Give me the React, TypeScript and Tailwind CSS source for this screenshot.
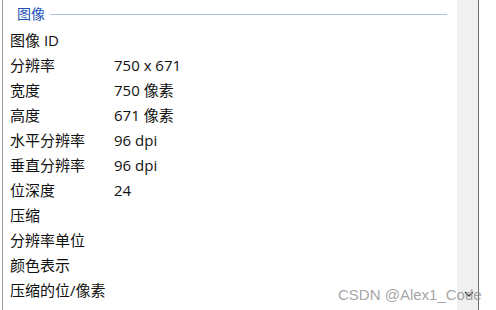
import React from 'react';

const rows: [string, string][] = [
  ['图像 ID', ''],
  ['分辨率', '750 x 671'],
  ['宽度', '750 像素'],
  ['高度', '671 像素'],
  ['水平分辨率', '96 dpi'],
  ['垂直分辨率', '96 dpi'],
  ['位深度', '24'],
  ['压缩', ''],
  ['分辨率单位', ''],
  ['颜色表示', ''],
  ['压缩的位/像素', ''],
];

export default function App() {
  return (
    <div
      className="relative flex w-[496px] h-[310px] overflow-hidden bg-white text-[#111]"
      style={{ fontFamily: '"Segoe UI", "Open Sans", "Noto Sans CJK SC", sans-serif' }}
    >
      <div className="w-[2px] shrink-0" />
      <div className="w-px shrink-0 bg-[#a0a0a0]" />
      <div className="flex-1 flex flex-col">
        <div className="flex items-center h-[28px] pl-[14px] pr-[10px]">
          <span className="text-[14px] leading-none text-[#1c4fb8]">图像</span>
          <div className="flex-1 ml-[5px] h-px bg-[#b4c3e4]" />
        </div>
        {rows.map(([k, v]) => (
          <div key={k} className="flex h-[25px] items-center pl-[7px] text-[15px]">
            <span className="w-[104px]">{k}</span>
            <span>{v}</span>
          </div>
        ))}
      </div>
      <div className="w-[21px] shrink-0 bg-[#f0f0f0] flex flex-col justify-end items-center pb-[12px]">
        <svg width="10" height="7" viewBox="0 0 10 7" className="ml-[2px]">
          <path d="M1 1 L5 5 L9 1" stroke="#404040" strokeWidth="1.5" fill="none" />
        </svg>
      </div>
      <div className="w-px shrink-0 bg-[#6e6e6e]" />
      <div className="w-[17px] shrink-0" />
      <div
        className="absolute left-[338px] top-[284px] text-[15px] text-[#9a9a9a]/90"
        style={{ fontFamily: '"Liberation Sans", Arial, sans-serif' }}
      >
        CSDN @Alex1_Code
      </div>
    </div>
  );
}
